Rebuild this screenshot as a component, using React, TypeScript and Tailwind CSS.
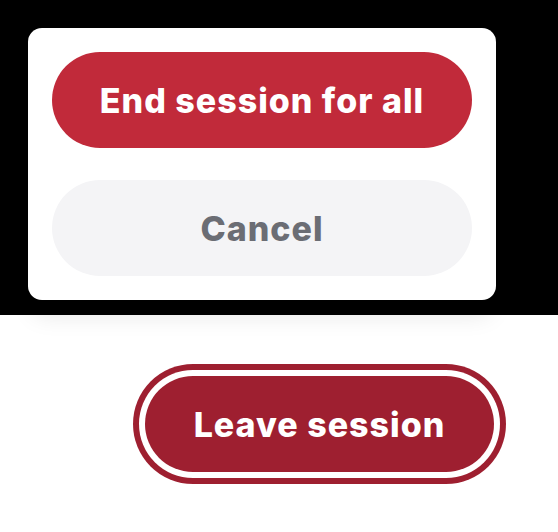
export default function App() {
  return (
    <div className="w-[558px] h-[532px] bg-white font-['Inter','Liberation_Sans',sans-serif]">
      {/* Dialog backdrop */}
      <div className="h-[315px] bg-black p-[28px] pr-[62px]">
        <div className="relative z-10 flex flex-col gap-[32px] rounded-[14px] bg-white p-[24px] shadow-xl">
          <button className="h-[96px] w-full rounded-full bg-[#c12a3a] text-[34px] font-extrabold tracking-[1px] text-white">
            End session for all
          </button>
          <button className="h-[96px] w-full rounded-full bg-[#f4f4f6] text-[34px] font-extrabold tracking-[1px] text-[#6b6d74]">
            Cancel
          </button>
        </div>
      </div>

      {/* Leave button */}
      <div className="flex justify-end pr-[64px] pt-[61px]">
        <button className="h-[96px] w-[349px] rounded-full bg-[#9e1f30] text-[34px] font-extrabold tracking-[1px] text-white ring-[6px] ring-[#9e1f30] ring-offset-[6px] ring-offset-white">
          Leave session
        </button>
      </div>
    </div>
  );
}
